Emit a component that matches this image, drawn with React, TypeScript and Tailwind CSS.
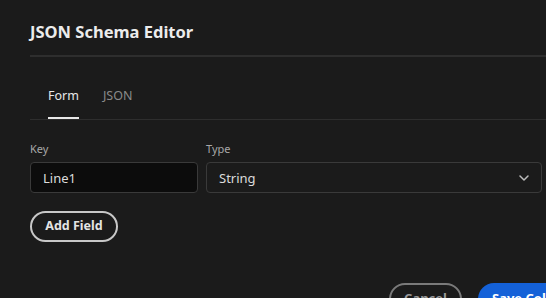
import { ChevronDown } from 'lucide-react';

export default function App() {
  return (
    <div className="w-[546px] h-[298px] overflow-hidden bg-[#1b1b1b] font-['Noto_Sans',sans-serif]">
      <div className="w-[640px] px-[30px] pt-[20px]">
        <h1 className="text-[16.5px] leading-[24px] font-bold text-[#ececec]">JSON Schema Editor</h1>
        <div className="mt-[11px] h-[2px] bg-[#2e2e2e]" />

        <div className="mt-[29px] flex gap-[24px] pl-[18px] border-b border-[#2e2e2e]">
          <button className="pb-[11px] border-b-2 border-[#e8e8e8] text-[12.5px] leading-[20px] text-[#e8e8e8]">Form</button>
          <button className="pb-[11px] border-b-2 border-transparent text-[12.5px] leading-[20px] text-[#8a8a8a]">JSON</button>
        </div>

        <div className="mt-[21px] w-[512px] grid grid-cols-[1fr_2fr] gap-x-[8px]">
          <div>
            <label className="block text-[11px] leading-[16px] text-[#a8a8a8]">Key</label>
            <div className="mt-[5px] h-[31px] flex items-center px-[12px] rounded-[4px] border border-[#3a3a3a] bg-[#0c0c0c] text-[13px] leading-[20px] text-[#dcdcdc]">
              Line1
            </div>
          </div>
          <div>
            <label className="block text-[11px] leading-[16px] text-[#a8a8a8]">Type</label>
            <div className="mt-[5px] h-[31px] flex items-center justify-between pl-[12px] pr-[9px] rounded-[4px] border border-[#3a3a3a] bg-[#1b1b1b] text-[13px] leading-[20px] text-[#dcdcdc]">
              <span>String</span>
              <ChevronDown className="h-[16px] w-[16px] text-[#bdbdbd]" strokeWidth={2.25} />
            </div>
          </div>
        </div>

        <button className="mt-[18px] h-[31px] w-[88px] rounded-full border-2 border-[#c8c8c8] text-[12.5px] font-bold text-[#e4e4e4]">
          Add Field
        </button>

        <div className="mt-[41px] pl-[359px] flex gap-[16px]">
          <button className="h-[32px] w-[73px] rounded-full border-2 border-[#7a7a7a] text-[13px] font-bold text-[#9a9a9a]">
            Cancel
          </button>
          <button className="h-[32px] px-[14px] rounded-full bg-[#1461d8] text-[13px] font-bold text-white whitespace-nowrap">
            Save Collection
          </button>
        </div>
      </div>
    </div>
  );
}
